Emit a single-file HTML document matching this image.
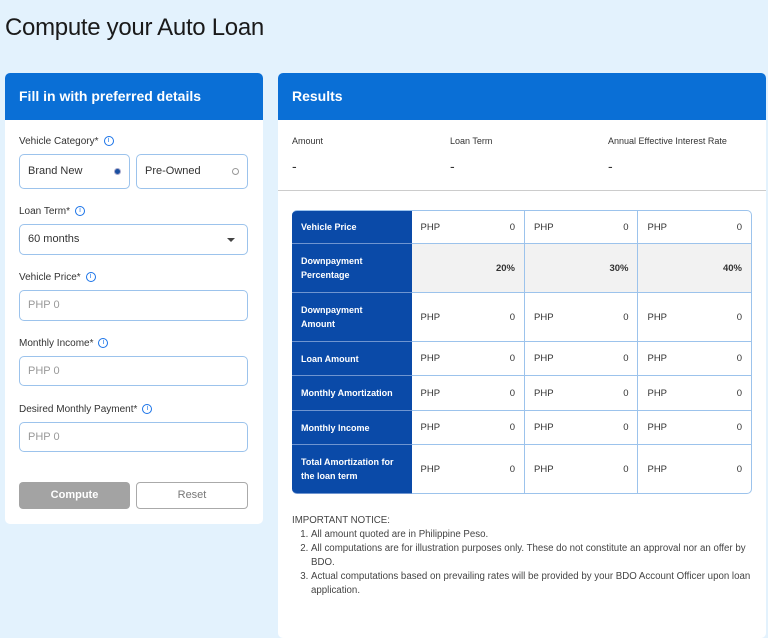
<!DOCTYPE html>
<html><head><style>
*{box-sizing:border-box;margin:0;padding:0}
body{width:768px;height:630px;background:#e3f2fd;font-family:"Liberation Sans",sans-serif;color:#333;position:relative;overflow:hidden}
.abs{position:absolute}
h1{position:absolute;left:5px;top:14px;font-size:24px;font-weight:normal;color:#1a1a1a;letter-spacing:-0.3px}
.card{position:absolute;background:#fff;border-radius:5px;overflow:hidden}
.hd{background:#0a6fd6;color:#fff;font-weight:bold;font-size:14px;height:47px;line-height:47px;padding-left:14px}
.lbl{position:absolute;left:19px;font-size:10px;color:#333}
.i{display:inline-block;width:10px;height:10px;border:1px solid #1a73e8;border-radius:50%;font-size:7px;line-height:8px;text-align:center;color:#1a73e8;margin-left:5px;vertical-align:middle}
.box{position:absolute;border:1px solid #9cc3ec;border-radius:5px;font-size:11px;color:#333;padding-left:8px}
.ph{color:#999}
table{position:absolute;left:292px;top:210px;width:460px;border-collapse:separate;border-spacing:0;font-size:9.5px}
td{border-right:1px solid #9cc3ec;border-bottom:1px solid #9cc3ec;padding:0 9px}
td.l{background:#0a4aa8;color:#fff;font-weight:bold;width:119px;border-bottom:1px solid #6f95d0;border-right:none;padding-left:9px;line-height:14px;font-size:9px}
tr:first-child td{border-top:1px solid #9cc3ec}
tr:first-child td.l{border-top-left-radius:5px}
tr:last-child td.l{border-bottom-left-radius:5px}
tr:first-child td:last-child{border-top-right-radius:5px}
tr:last-child td:last-child{border-bottom-right-radius:5px}
td.v{width:113px}
td.v span{float:right}
tr.g td.v{background:#f2f2f2;text-align:right;font-weight:bold}
</style></head><body>
<h1>Compute your Auto Loan</h1>
<div class="card" style="left:5px;top:73px;width:258px;height:451px">
<div class="hd">Fill in with preferred details</div>
</div>
<div class="lbl" style="top:136px">Vehicle Category*<span class="i">i</span></div>
<div class="box" style="left:19px;top:154px;width:111px;height:35px;line-height:33px">Brand New<span class="abs" style="right:8px;top:13px;width:7px;height:7px;border-radius:50%;background:#1a4fa0;border:1px solid #aac"></span></div>
<div class="box" style="left:136px;top:154px;width:112px;height:35px;line-height:33px">Pre-Owned<span class="abs" style="right:8px;top:13px;width:7px;height:7px;border-radius:50%;border:1px solid #999"></span></div>
<div class="lbl" style="top:206px">Loan Term*<span class="i">i</span></div>
<div class="box" style="left:19px;top:224px;width:229px;height:31px;line-height:29px">60 months<span class="abs" style="right:12px;top:13px;border-left:4px solid transparent;border-right:4px solid transparent;border-top:4px solid #444"></span></div>
<div class="lbl" style="top:272px">Vehicle Price*<span class="i">i</span></div>
<div class="box ph" style="left:19px;top:290px;width:229px;height:31px;line-height:29px">PHP 0</div>
<div class="lbl" style="top:338px">Monthly Income*<span class="i">i</span></div>
<div class="box ph" style="left:19px;top:356px;width:229px;height:30px;line-height:28px">PHP 0</div>
<div class="lbl" style="top:404px">Desired Monthly Payment*<span class="i">i</span></div>
<div class="box ph" style="left:19px;top:422px;width:229px;height:30px;line-height:28px">PHP 0</div>
<div class="abs" style="left:19px;top:482px;width:111px;height:27px;background:#a3a3a3;border-radius:4px;color:#fff;font-size:11px;font-weight:bold;text-align:center;line-height:27px">Compute</div>
<div class="abs" style="left:136px;top:482px;width:112px;height:27px;border:1px solid #aaa;border-radius:4px;color:#777;font-size:11px;text-align:center;line-height:25px">Reset</div>

<div class="card" style="left:278px;top:73px;width:488px;height:565px">
<div class="hd">Results</div>
</div>
<div class="abs" style="left:292px;top:136px;font-size:9px">Amount</div>
<div class="abs" style="left:450px;top:136px;font-size:9px">Loan Term</div>
<div class="abs" style="left:608px;top:136px;font-size:9px">Annual Effective Interest Rate</div>
<div class="abs" style="left:292px;top:158px;font-size:14px">-</div>
<div class="abs" style="left:450px;top:158px;font-size:14px">-</div>
<div class="abs" style="left:608px;top:158px;font-size:14px">-</div>
<div class="abs" style="left:278px;top:190px;width:488px;height:1px;background:#ccc"></div>
<table>
<tr style="height:34px"><td class="l">Vehicle Price</td><td class="v">PHP<span>0</span></td><td class="v">PHP<span>0</span></td><td class="v">PHP<span>0</span></td></tr>
<tr class="g" style="height:49px"><td class="l">Downpayment<br>Percentage</td><td class="v">20%</td><td class="v">30%</td><td class="v">40%</td></tr>
<tr style="height:49px"><td class="l">Downpayment<br>Amount</td><td class="v">PHP<span>0</span></td><td class="v">PHP<span>0</span></td><td class="v">PHP<span>0</span></td></tr>
<tr style="height:34px"><td class="l">Loan Amount</td><td class="v">PHP<span>0</span></td><td class="v">PHP<span>0</span></td><td class="v">PHP<span>0</span></td></tr>
<tr style="height:35px"><td class="l">Monthly Amortization</td><td class="v">PHP<span>0</span></td><td class="v">PHP<span>0</span></td><td class="v">PHP<span>0</span></td></tr>
<tr style="height:34px"><td class="l">Monthly Income</td><td class="v">PHP<span>0</span></td><td class="v">PHP<span>0</span></td><td class="v">PHP<span>0</span></td></tr>
<tr style="height:49px"><td class="l">Total Amortization for<br>the loan term</td><td class="v">PHP<span>0</span></td><td class="v">PHP<span>0</span></td><td class="v">PHP<span>0</span></td></tr>
</table>
<div class="abs" style="left:292px;top:514px;font-size:9.7px;line-height:14px;width:462px;color:#444">IMPORTANT NOTICE:
<ol style="padding-left:19px">
<li>All amount quoted are in Philippine Peso.</li>
<li>All computations are for illustration purposes only. These do not constitute an approval nor an offer by BDO.</li>
<li>Actual computations based on prevailing rates will be provided by your BDO Account Officer upon loan application.</li>
</ol></div>
</body></html>
